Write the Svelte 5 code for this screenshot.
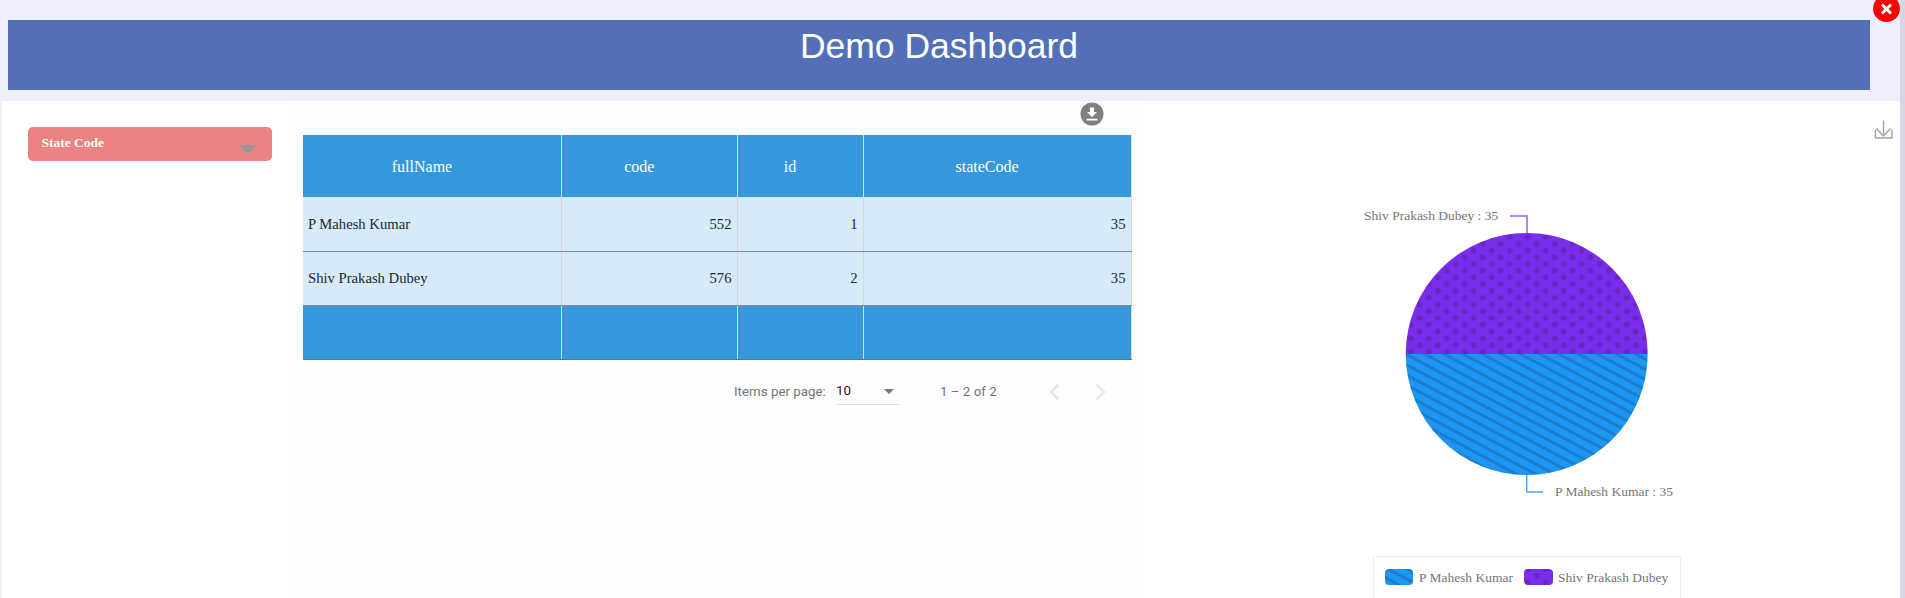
<script>
  const columns = [
    { label: 'fullName', width: 258.5 },
    { label: 'code', width: 175.5 },
    { label: 'id', width: 126 },
    { label: 'stateCode', width: 268 }
  ];
  const rows = [
    { fullName: 'P Mahesh Kumar', code: 552, id: 1, stateCode: 35 },
    { fullName: 'Shiv Prakash Dubey', code: 576, id: 2, stateCode: 35 }
  ];
  const cx = 395.7;
  const cy = 253;
  const r = 121;
</script>

<div class="root">
  <div class="page">
    <header class="banner"><h1>Demo Dashboard</h1></header>
    <button class="close" aria-label="Close">
      <svg width="27" height="27" viewBox="0 0 27 27"><path d="M9 9.5l9 9M18 9.5l-9 9" stroke="#fff" stroke-width="3" fill="none" /></svg>
    </button>

    <main class="content">
      <aside class="filters">
        <div class="filter">
          <span>State Code</span>
          <i class="caret"></i>
        </div>
      </aside>

      <section class="table-panel">
        <div class="tools">
          <svg width="24" height="24" viewBox="0 0 24 24" aria-label="Download">
            <circle cx="12" cy="12" r="11.5" fill="#808080" />
            <path d="M10 5.5h4v4.5h3l-5 5-5-5h3z M6.5 16.8h11v1.7h-11z" fill="#fff" />
          </svg>
        </div>
        <table>
          <colgroup>
            {#each columns as c}<col style="width:{c.width}px" />{/each}
          </colgroup>
          <thead>
            <tr>{#each columns as c}<th>{c.label}</th>{/each}</tr>
          </thead>
          <tbody>
            {#each rows as row}
              <tr>
                <td>{row.fullName}</td>
                <td class="num">{row.code}</td>
                <td class="num">{row.id}</td>
                <td class="num">{row.stateCode}</td>
              </tr>
            {/each}
          </tbody>
          <tfoot>
            <tr>{#each columns as c}<td></td>{/each}</tr>
          </tfoot>
        </table>
        <div class="paginator">
          <span class="ipp">Items per page:</span>
          <div class="select"><span>10</span><i class="mat-caret"></i></div>
          <span class="range">1 – 2 of 2</span>
          <svg class="nav" width="24" height="24" viewBox="0 0 24 24"><path d="M15.5 4.5L8 12l7.5 7.5" /></svg>
          <svg class="nav second" width="24" height="24" viewBox="0 0 24 24"><path d="M8.5 4.5L16 12l-7.5 7.5" /></svg>
        </div>
      </section>

      <section class="chart">
        <svg class="canvas" width="758" height="497" viewBox="11 0 758 497">
          <defs>
            <pattern id="dots" width="18" height="13.5" patternUnits="userSpaceOnUse" patternTransform="translate(396.7 136)">
              <rect width="18" height="13.5" fill="#7b2ded" />
              <circle cx="0" cy="0" r="2.8" fill="#6727c2" />
              <circle cx="18" cy="0" r="2.8" fill="#6727c2" />
              <circle cx="0" cy="13.5" r="2.8" fill="#6727c2" />
              <circle cx="18" cy="13.5" r="2.8" fill="#6727c2" />
              <circle cx="9" cy="6.75" r="2.8" fill="#6727c2" />
            </pattern>
            <pattern id="lines" width="9" height="9" patternUnits="userSpaceOnUse" patternTransform="rotate(28)">
              <rect width="9" height="9" fill="#1b96f3" />
              <rect y="3" width="9" height="3" fill="#1a7dcf" />
            </pattern>
            <pattern id="swatch-dots" width="18" height="13.5" patternUnits="userSpaceOnUse" patternTransform="translate(262 468)">
              <rect width="18" height="13.5" fill="#7b2ded" />
              <circle cx="9" cy="0" r="2.8" fill="#6727c2" />
              <circle cx="0" cy="6.75" r="2.8" fill="#6727c2" />
              <circle cx="18" cy="6.75" r="2.8" fill="#6727c2" />
              <circle cx="9" cy="13.5" r="2.8" fill="#6727c2" />
            </pattern>
          </defs>

          <path d="M752.5 19.5V35M745.5 27.5l7 7.5 7-7.5M744.5 28.5v8.5h16.5v-8.5" fill="none" stroke="#a3a3a3" stroke-width="1.4" />

          <path d="M{cx - r} {cy}A{r} {r} 0 0 1 {cx + r} {cy}Z" fill="url(#dots)" />
          <path d="M{cx - r} {cy}A{r} {r} 0 0 0 {cx + r} {cy}Z" fill="url(#lines)" />

          <path d="M379 115h17v17" fill="none" stroke="#9462f5" stroke-width="1.5" />
          <path d="M395.7 374v17h16.5" fill="none" stroke="#4da9f7" stroke-width="1.5" />
          <text x="233" y="119" class="lbl">Shiv Prakash Dubey : 35</text>
          <text x="424" y="395" class="lbl">P Mahesh Kumar : 35</text>

          <rect x="242.5" y="455.5" width="307" height="60" fill="#fff" stroke="#eeeeee" />
          <rect x="254" y="468" width="28" height="16" rx="4" fill="url(#lines)" />
          <text x="288" y="481" class="lbl">P Mahesh Kumar</text>
          <rect x="393" y="468" width="29" height="16" rx="4" fill="url(#swatch-dots)" />
          <text x="427" y="481" class="lbl">Shiv Prakash Dubey</text>
        </svg>
      </section>
    </main>
  </div>
  <div class="scrollbar"></div>
</div>

<style>
  :global(body) {
    margin: 0;
    overflow: hidden;
  }
  .root {
    display: flex;
    width: 1905px;
    height: 598px;
    overflow: hidden;
    background: #eeeefb;
  }
  .page {
    position: relative;
    flex: 1;
    min-width: 0;
    display: flex;
    flex-direction: column;
  }
  .scrollbar {
    width: 5px;
    background: #d6d6e4;
  }
  .banner {
    margin: 20px 30px 0 8px;
    height: 70px;
    background: #536fb7;
    flex: none;
  }
  h1 {
    margin: 0;
    text-align: center;
    color: #fff;
    font: 400 35.5px/52px "Liberation Sans", Arial, sans-serif;
  }
  .close {
    position: absolute;
    top: -5px;
    right: 0;
    width: 27px;
    height: 27px;
    padding: 0;
    border: 0;
    border-radius: 50%;
    background: #ff0000;
    display: flex;
  }
  .content {
    flex: 1;
    min-height: 0;
    margin: 11px 0 0 2px;
    background: #fff;
    display: flex;
    overflow: hidden;
  }
  .filters {
    width: 290px;
    flex: none;
    padding: 26px 0 0 26px;
    box-sizing: border-box;
  }
  .filter {
    position: relative;
    width: 244px;
    height: 34px;
    box-sizing: border-box;
    padding: 7px 13.5px;
    background: #ec8282;
    border-radius: 5px;
    color: #fff;
    font: 700 13.5px/18px "Liberation Serif", serif;
  }
  .caret {
    position: absolute;
    left: 211px;
    top: 18px;
    border-left: 9px solid transparent;
    border-right: 9px solid transparent;
    border-top: 9px solid #999;
  }
  .table-panel {
    width: 850px;
    flex: none;
    box-sizing: border-box;
    padding: 0 11px;
    background: #fefefe;
  }
  .tools {
    height: 34px;
    display: flex;
    justify-content: flex-end;
    align-items: flex-start;
    padding-right: 27px;
    padding-top: 1px;
    box-sizing: border-box;
  }
  .tools svg {
    display: block;
  }
  table {
    width: 828px;
    table-layout: fixed;
    border-collapse: collapse;
    font: 400 14.67px "Liberation Serif", serif;
  }
  th,
  tfoot td {
    background: #3498db;
    color: #fff;
    border-right: 1px solid #d6dbdf;
    padding: 0;
  }
  th {
    height: 62px;
    padding: 1px 20px 0 0;
    box-sizing: border-box;
    font-size: 16px;
    font-weight: 400;
    text-align: center;
  }
  tbody td {
    height: 54px;
    padding: 1px 5px 0;
    box-sizing: border-box;
    background: #d6eaf8;
    color: #1c2833;
    border-right: 1px solid #d5d8dc;
    border-bottom: 1px solid #808b96;
  }
  tfoot td {
    height: 54px;
    box-sizing: border-box;
    border-bottom: 1px solid #2e86c1;
  }
  .num {
    text-align: right;
  }
  .paginator {
    display: flex;
    align-items: center;
    height: 64px;
    padding-left: 431px;
    font: 400 13.33px "Roboto", sans-serif;
    color: #757575;
  }
  .ipp {
    width: 102px;
    flex: none;
    white-space: nowrap;
  }
  .select {
    position: relative;
    width: 63px;
    height: 26px;
    flex: none;
    box-sizing: content-box;
    border-bottom: 1px solid #e0e0e0;
    color: #212121;
    line-height: 26px;
  }
  .mat-caret {
    position: absolute;
    left: 48px;
    top: 11px;
    border-left: 5px solid transparent;
    border-right: 5px solid transparent;
    border-top: 5px solid #757575;
  }
  .range {
    margin-left: 41px;
    width: 103px;
    flex: none;
  }
  .nav {
    flex: none;
  }
  .nav.second {
    margin-left: 21px;
  }
  .nav path {
    fill: none;
    stroke: #e8e8e8;
    stroke-width: 2.5;
  }
  .chart {
    flex: 1;
    min-width: 0;
  }
  .canvas {
    display: block;
  }
  .lbl {
    font: 400 13.5px "Liberation Serif", serif;
    fill: #757575;
  }
</style>
